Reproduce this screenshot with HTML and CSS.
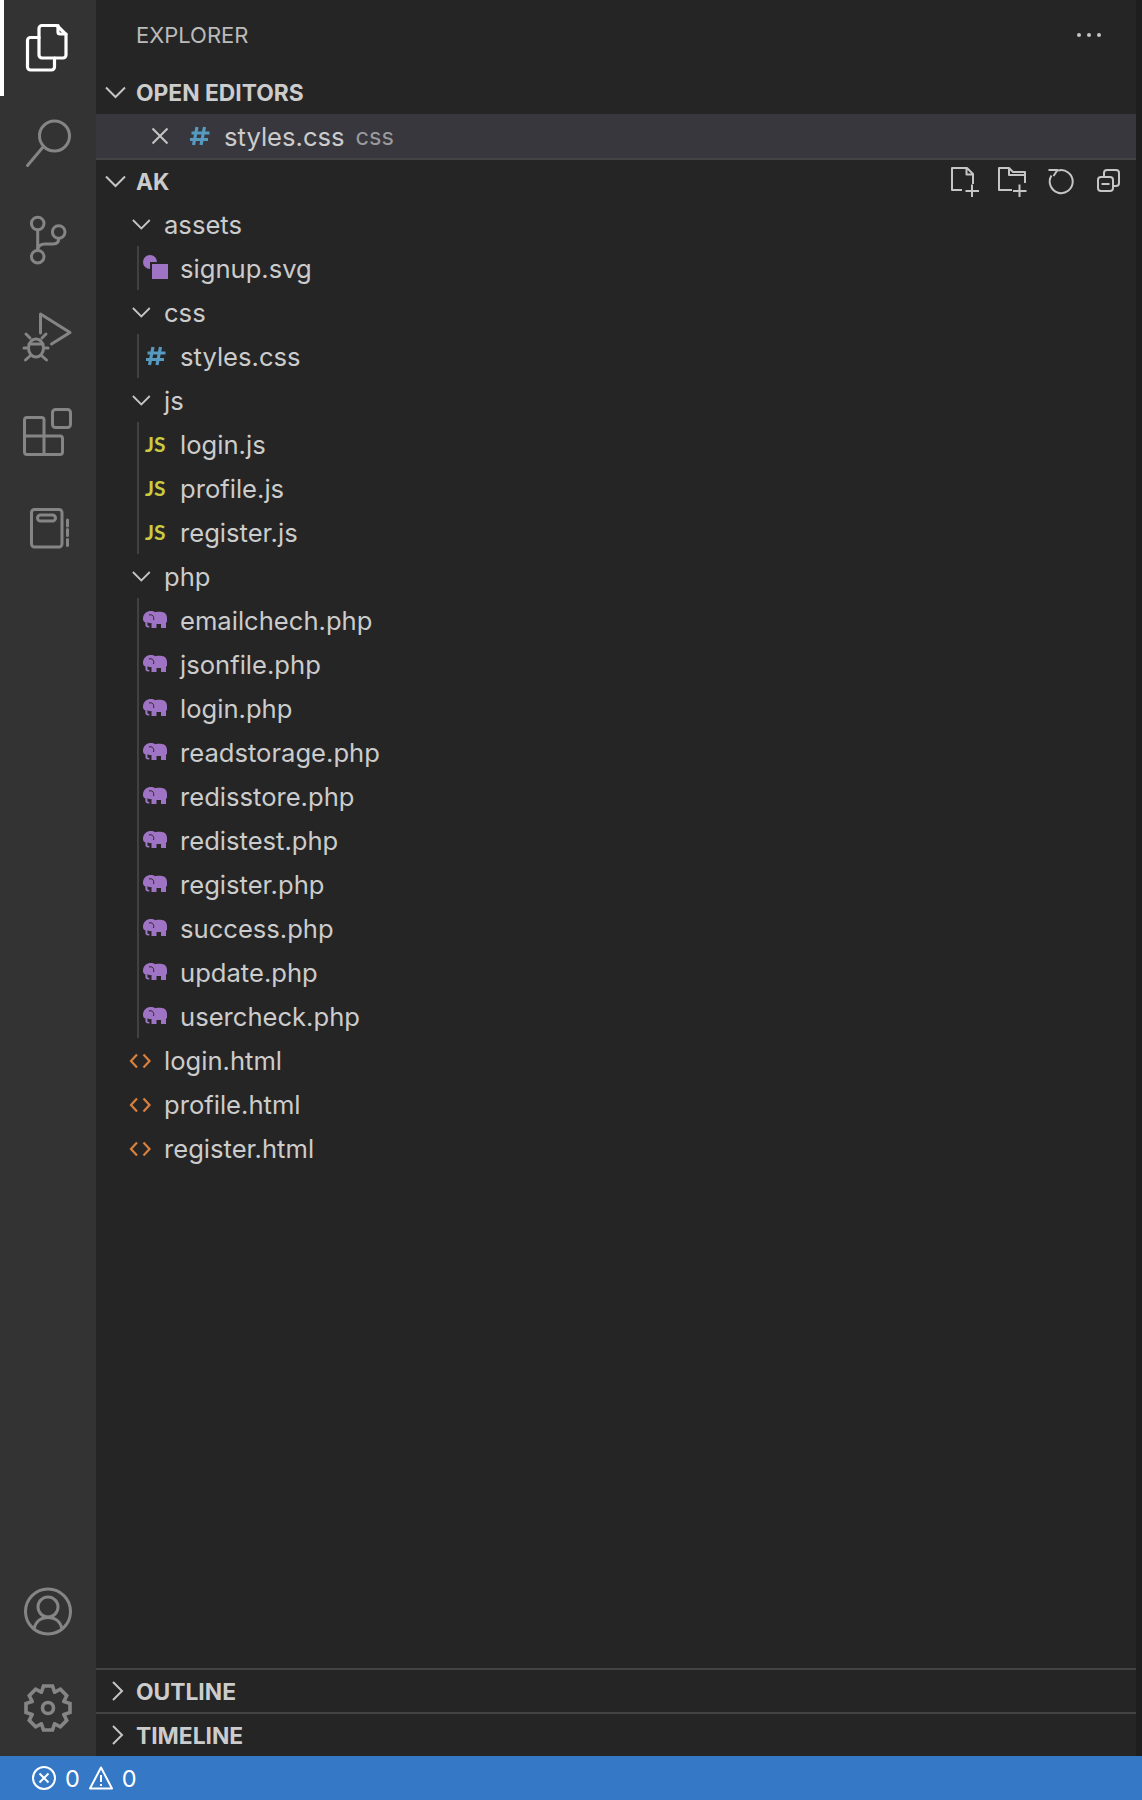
FILE: index.html
```html
<!DOCTYPE html>
<html lang="en">
<head>
<meta charset="utf-8">
<title>Explorer</title>
<link rel="stylesheet" href="styles.css">
</head>
<body>
<svg class="defs" width="0" height="0" aria-hidden="true">
  <symbol id="ch-down" viewBox="0 0 36 44"><path d="M1 17.500 L10.500 27 L20 17.500"/></symbol>
  <symbol id="ch-right" viewBox="0 0 36 44"><path d="M1 13 L10 22 L1 31"/></symbol>
  <symbol id="i-hash" viewBox="0 0 38 44"><path class="hash" d="M11 13 L7.500 31 M18.500 13 L15 31 M5.500 19 H23.500 M4 25.500 H22"/></symbol>
  <symbol id="i-php" viewBox="0 0 38 44">
    <path class="fill-php" d="M1 21 C1 15.500 5 13 9 13 C11 13 12.500 13.600 13.500 14.300 C15.500 13.600 18 13.700 20 14 C23 14.400 25 16.500 25 20 L25 24.500 L24 24 L24 30 L19 30 L19 26 L14.500 26 L14.500 30 L9.500 30 L9.500 25 C7.500 25.400 6 24.800 5.500 24 L5.500 27 C5.500 28 6.500 28.200 7 27.600 L7.600 29 C5.500 30.400 3.400 29 3.400 27 L3.400 24.500 C2 24 1 23 1 21 Z"/>
    <path class="ear" d="M7 17 C10 16 12.500 18 11.500 22"/>
  </symbol>
  <symbol id="i-html" viewBox="0 0 36 44"><path class="html" d="M9 16.500 L3 23 L9 29.500 M15.500 16.500 L21.500 23 L15.500 29.500"/></symbol>
</svg>

<div class="window">
  <nav class="activity">
    <div class="activity-group">
      <a class="act act-active">
        <svg viewBox="0 0 96 96"><path d="M57 25.500 H42 a3 3 0 0 0 -3 3 V55 a3 3 0 0 0 3 3 H63 a3 3 0 0 0 3 -3 V34.500 Z"/><path d="M58 25.500 V32 a2 2 0 0 0 2 2 H66"/><path d="M39 37.500 H30.500 a3 3 0 0 0 -3 3 V67 a3 3 0 0 0 3 3 H51.500 a3 3 0 0 0 3 -3 V58"/></svg>
      </a>
      <a class="act">
        <svg viewBox="0 0 96 96"><circle cx="54.500" cy="40" r="15"/><path d="M43.500 50.500 L27.500 69.500"/></svg>
      </a>
      <a class="act">
        <svg viewBox="0 0 96 96"><circle cx="37.700" cy="31.500" r="6.300"/><circle cx="58.700" cy="40" r="6.300"/><circle cx="37.700" cy="64.700" r="6.300"/><path d="M37.700 38 V58"/><path d="M58.700 46.500 C58.700 50 56.500 52 53 52 H45 C41 52 38 54 37.700 58"/></svg>
      </a>
      <a class="act">
        <svg viewBox="0 0 96 96"><path d="M40.500 45 V26 L70 44.500 L51.500 56"/><ellipse cx="36" cy="60" rx="7.500" ry="9"/><path d="M29 56 H43 M30 50 L26 46 M42 50 L46 46 M24 60 H28.500 M43.500 60 H48 M30 68 L25.500 72 M42 68 L46.500 72"/></svg>
      </a>
      <a class="act">
        <svg viewBox="0 0 96 96"><path d="M44 52 V36 a2.500 2.500 0 0 0 -2.500 -2.500 H27 a2.500 2.500 0 0 0 -2.500 2.500 V68 a2.500 2.500 0 0 0 2.500 2.500 H60 a2.500 2.500 0 0 0 2.500 -2.500 V54.500 a2.500 2.500 0 0 0 -2.500 -2.500 Z M44 52 V70.500 M24.500 52 H44"/><rect x="52.500" y="25.500" width="18" height="18" rx="3"/></svg>
      </a>
      <a class="act">
        <svg viewBox="0 0 96 96"><rect x="31.500" y="29.500" width="30.500" height="37.500" rx="3"/><rect x="37.500" y="35" width="18" height="6" rx="3"/><path d="M67.500 40 V46 M67.500 49.500 V55.500 M67.500 59.500 V65.500"/></svg>
      </a>
    </div>
    <div class="activity-group">
      <a class="act">
        <svg viewBox="0 0 96 96"><circle cx="48" cy="47.500" r="22.500"/><circle cx="48" cy="43" r="10"/><path d="M34 65 C35.500 57.500 41 53.500 48 53.500 C55 53.500 60.500 57.500 62 65"/></svg>
      </a>
      <a class="act act-gear">
        <svg viewBox="0 0 96 96"><g transform="translate(48 48)"><g id="gear"><path d="M-6.500 -16 L-4.500 -22 H4.500 L6.500 -16"/></g><use href="#gear" transform="rotate(45)"/><use href="#gear" transform="rotate(90)"/><use href="#gear" transform="rotate(135)"/><use href="#gear" transform="rotate(180)"/><use href="#gear" transform="rotate(225)"/><use href="#gear" transform="rotate(270)"/><use href="#gear" transform="rotate(315)"/><circle r="5.500"/></g></svg>
      </a>
    </div>
  </nav>

  <main class="sidebar">
    <header class="title">
      <span class="title-text">EXPLORER</span>
      <span class="dots"><i></i><i></i><i></i></span>
    </header>

    <section class="section-head">
      <svg class="chev"><use href="#ch-down"/></svg>
      <span>OPEN EDITORS</span>
    </section>
    <div class="open-row">
      <svg class="close" viewBox="0 0 20 20"><path d="M2.500 2.500 L17.500 17.500 M17.500 2.500 L2.500 17.500"/></svg>
      <svg class="fi-open"><use href="#i-hash"/></svg>
      <span class="name">styles.css</span>
      <span class="desc">css</span>
    </div>

    <section class="section-head root-head">
      <svg class="chev"><use href="#ch-down"/></svg>
      <span>AK</span>
      <div class="actions">
        <svg viewBox="0 0 48 44"><path d="M20 32 H10 V10 H25 L31 16 V26 M24.500 10 V16.500 H31 M30 26.500 V39 M23.500 33 H37"/></svg>
        <svg viewBox="0 0 48 44"><path d="M22 32 H9 V10 H19 L23 14 H35 V25 M19 10 V17 H35 M29.500 26.500 V39 M23 33 H36.500"/></svg>
        <svg viewBox="0 0 48 44"><path d="M20 12.600 A11.500 11.500 0 1 1 13.500 17.500"/><path d="M10.500 12 H19.500 L15.500 18"/></svg>
        <svg viewBox="0 0 48 44"><rect x="12" y="19" width="15" height="14" rx="3"/><path d="M18 19 V15 a3 3 0 0 1 3 -3 H30 a3 3 0 0 1 3 3 V25 a3 3 0 0 1 -3 3 H27 M15.500 26 H23.500"/></svg>
      </div>
    </section>

    <div class="row folder"><svg class="chev"><use href="#ch-down"/></svg><span>assets</span></div>
    <div class="guide">
      <div class="row file">
        <svg class="fi" viewBox="0 0 38 44"><circle class="fill-php" cx="8" cy="16" r="7"/><rect class="svg-sq" x="9" y="17" width="18" height="17"/></svg>
        <span>signup.svg</span>
      </div>
    </div>

    <div class="row folder"><svg class="chev"><use href="#ch-down"/></svg><span>css</span></div>
    <div class="guide">
      <div class="row file"><svg class="fi"><use href="#i-hash"/></svg><span>styles.css</span></div>
    </div>

    <div class="row folder"><svg class="chev"><use href="#ch-down"/></svg><span>js</span></div>
    <div class="guide">
      <div class="row file"><b class="js">JS</b><span>login.js</span></div>
      <div class="row file"><b class="js">JS</b><span>profile.js</span></div>
      <div class="row file"><b class="js">JS</b><span>register.js</span></div>
    </div>

    <div class="row folder"><svg class="chev"><use href="#ch-down"/></svg><span>php</span></div>
    <div class="guide">
      <div class="row file"><svg class="fi"><use href="#i-php"/></svg><span>emailchech.php</span></div>
      <div class="row file"><svg class="fi"><use href="#i-php"/></svg><span>jsonfile.php</span></div>
      <div class="row file"><svg class="fi"><use href="#i-php"/></svg><span>login.php</span></div>
      <div class="row file"><svg class="fi"><use href="#i-php"/></svg><span>readstorage.php</span></div>
      <div class="row file"><svg class="fi"><use href="#i-php"/></svg><span>redisstore.php</span></div>
      <div class="row file"><svg class="fi"><use href="#i-php"/></svg><span>redistest.php</span></div>
      <div class="row file"><svg class="fi"><use href="#i-php"/></svg><span>register.php</span></div>
      <div class="row file"><svg class="fi"><use href="#i-php"/></svg><span>success.php</span></div>
      <div class="row file"><svg class="fi"><use href="#i-php"/></svg><span>update.php</span></div>
      <div class="row file"><svg class="fi"><use href="#i-php"/></svg><span>usercheck.php</span></div>
    </div>

    <div class="row root-file"><svg class="fh"><use href="#i-html"/></svg><span>login.html</span></div>
    <div class="row root-file"><svg class="fh"><use href="#i-html"/></svg><span>profile.html</span></div>
    <div class="row root-file"><svg class="fh"><use href="#i-html"/></svg><span>register.html</span></div>

    <div class="spacer"></div>

    <section class="section-head collapsed">
      <svg class="chev chev-r"><use href="#ch-right"/></svg>
      <span>OUTLINE</span>
    </section>
    <section class="section-head collapsed">
      <svg class="chev chev-r"><use href="#ch-right"/></svg>
      <span>TIMELINE</span>
    </section>
  </main>
  <div class="edge"></div>
</div>

<footer class="status">
  <svg class="st-icon" viewBox="0 0 24 24"><circle cx="12" cy="12" r="11"/><path d="M7.500 7.500 L16.500 16.500 M16.500 7.500 L7.500 16.500"/></svg>
  <span>0</span>
  <svg class="st-icon warn" viewBox="0 0 24 24"><path d="M12 1.500 L23 22.500 H1 Z"/><path d="M12 9 V16 M12 18 V20"/></svg>
  <span>0</span>
</footer>
</body>
</html>
```
FILE: styles.css
```css
* { box-sizing: border-box; }
html, body { margin: 0; padding: 0; }
body {
  width: 1142px;
  height: 1800px;
  display: flex;
  flex-direction: column;
  overflow: hidden;
  background: #252526;
  color: #cccccc;
  font-family: Inter, "Liberation Sans", sans-serif;
  font-size: 25.6px;
}
.defs { position: absolute; }
svg { display: block; fill: none; }

.window { flex: 1; display: flex; min-height: 0; }

.activity {
  width: 96px;
  flex: none;
  background: #333333;
  display: flex;
  flex-direction: column;
  justify-content: space-between;
}
.act { display: block; height: 96px; }
.act svg { width: 96px; height: 96px; stroke: #858585; stroke-width: 3; stroke-linejoin: round; stroke-linecap: round; }
.act-gear svg { stroke-width: 3.6; stroke-linejoin: miter; }
.act-active { box-shadow: inset 4px 0 0 #ffffff; }
.act-active svg { stroke: #ffffff; stroke-width: 3.2; }

.sidebar {
  flex: 1;
  min-width: 0;
  background: #252526;
  display: flex;
  flex-direction: column;
}
.edge { width: 6px; flex: none; background: #1e1e1e; }

.title {
  height: 70px;
  flex: none;
  display: flex;
  align-items: center;
  justify-content: space-between;
  padding: 0 35px 0 40px;
  color: #bbbbbb;
  font-size: 22px;
}
.dots { display: flex; gap: 6px; }
.dots i { width: 4px; height: 4px; border-radius: 50%; background: #c5c5c5; }

.section-head {
  height: 44px;
  flex: none;
  display: flex;
  align-items: center;
  font-weight: 700;
  font-size: 22.8px;
  padding-left: 9px;
}
.root-head, .collapsed { border-top: 2px solid #434344; }

.chev { width: 36px; height: 44px; flex: none; stroke: #c5c5c5; stroke-width: 2; overflow: visible; }
.section-head .chev { margin-right: -5px; }
.chev-r { transform: translateX(7px); }

.open-row {
  height: 44px;
  flex: none;
  display: flex;
  align-items: center;
  background: #37373d;
  padding-left: 54px;
}
.close { width: 20px; height: 20px; stroke: #c5c5c5; stroke-width: 2; flex: none; }
.fi-open { width: 38px; height: 44px; flex: none; margin-left: 16px; overflow: visible; }
.name, .desc { padding-top: 1px; }
.desc { color: #9b9b9d; font-size: 23.5px; margin-left: 11px; }

.actions {
  margin-left: auto;
  margin-right: 2px;
  display: flex;
  margin-top: -2px;
}
.actions svg { width: 48px; height: 44px; stroke: #c5c5c5; stroke-width: 2; stroke-linejoin: round; }

.row { height: 44px; flex: none; display: flex; align-items: center; }
.row > span { padding-bottom: 0; }
.folder { padding-left: 36px; }
.folder .chev { width: 32px; overflow: visible; }
.root-file { padding-left: 32px; }
.fh { width: 36px; height: 44px; flex: none; overflow: visible; }
.guide { margin-left: 41px; border-left: 2px solid #414141; }
.file { padding-left: 3px; }
.fi { width: 38px; height: 44px; flex: none; overflow: visible; }
.hash { stroke: #569ac0; stroke-width: 3.2; }
.fill-php { fill: #a074c4; stroke: none; }
.ear { stroke: #252526; stroke-width: 1; fill: none; }
.html { stroke: #d9803c; stroke-width: 2.2; fill: none; }
.svg-sq { fill: #a074c4; stroke: #252526; stroke-width: 2; }
.js {
  width: 38px;
  flex: none;
  padding-left: 3px;
  padding-bottom: 2px;
  color: #cbcb41;
  font-family: Lato, Inter, sans-serif;
  font-size: 21px;
  font-weight: 700;
}
.spacer { flex: 1; }

.status {
  height: 44px;
  flex: none;
  background: #3478c6;
  color: #ffffff;
  display: flex;
  align-items: center;
  padding-left: 32px;
  font-size: 23.5px;
}
.st-icon { width: 24px; height: 24px; stroke: #ffffff; stroke-width: 2; stroke-linejoin: round; margin-right: 9px; }
.warn { margin-left: 9px; }
```
